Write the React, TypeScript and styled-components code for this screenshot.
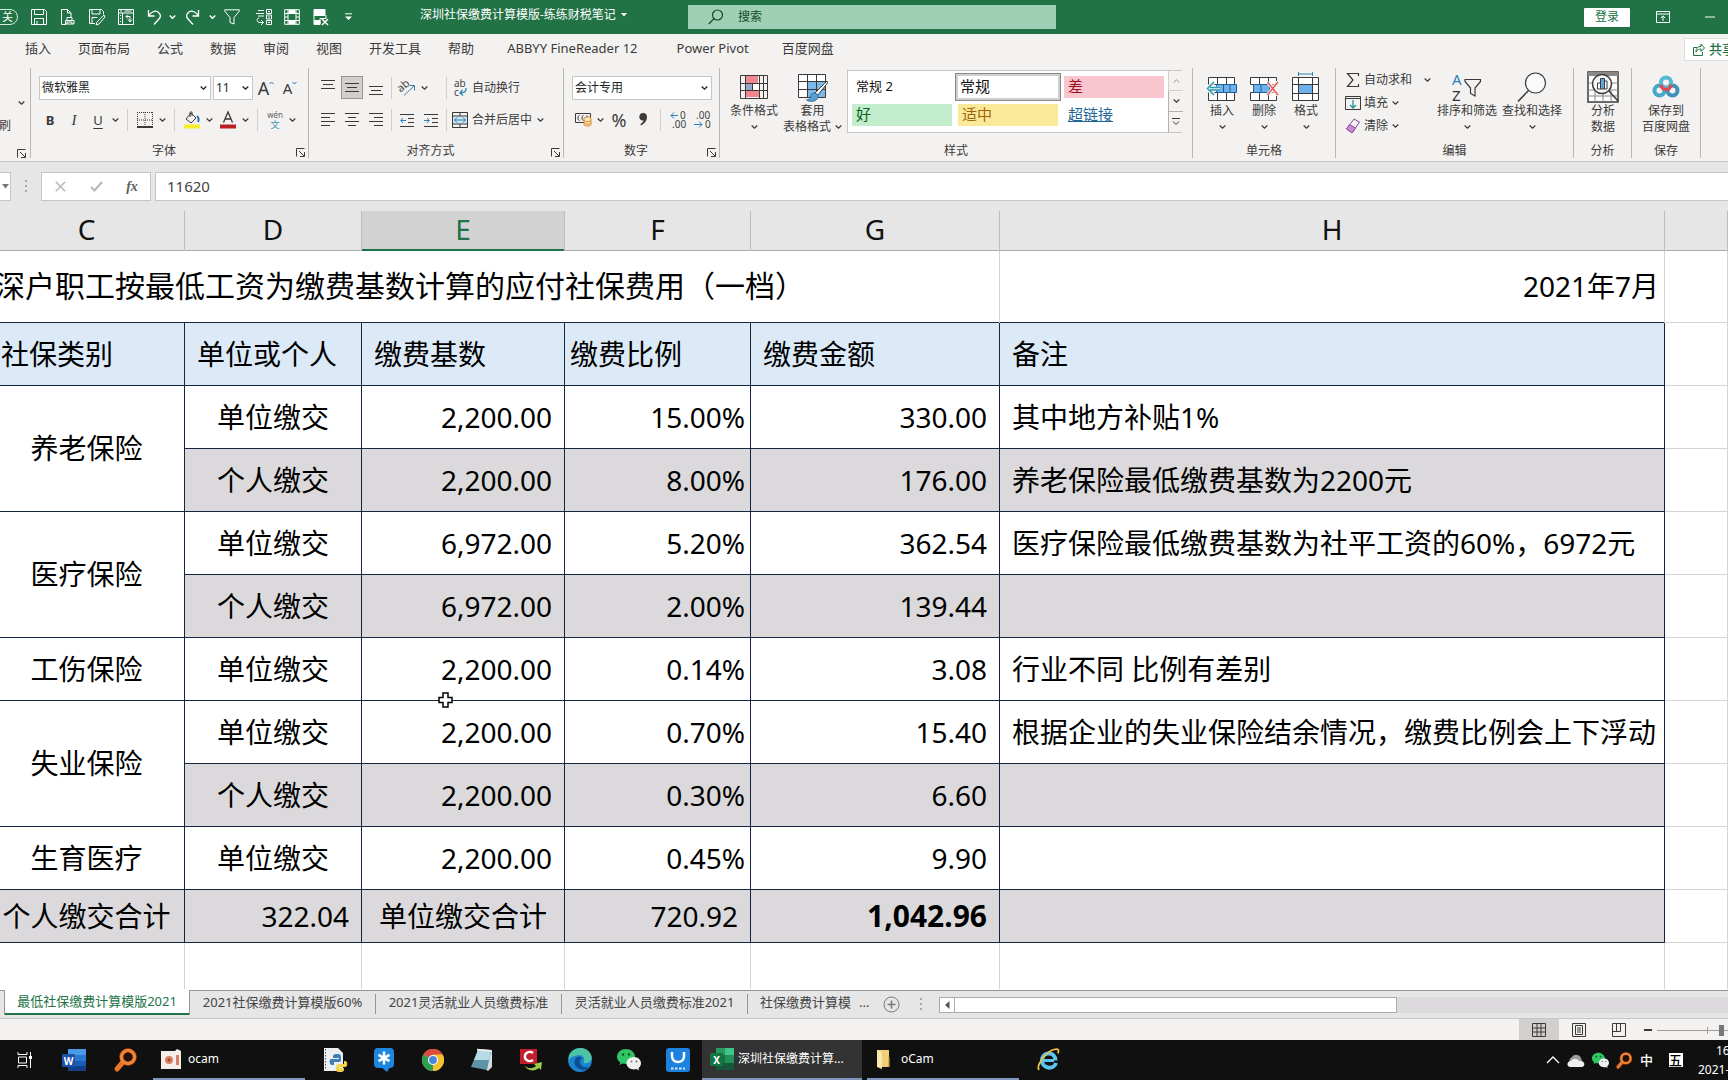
import React from "react";
import styled, { createGlobalStyle } from "styled-components";

const sans = '"Noto Sans", "Noto Sans CJK SC", sans-serif';

const GlobalStyle = createGlobalStyle`
  *, *::before, *::after { box-sizing: border-box; }
  body { margin: 0; overflow: hidden; background: #fff; font-family: ${sans}; }
  button, input, select { font: inherit; color: inherit; }
  button { border: 0; padding: 0; background: none; cursor: default; }
  svg { display: block; flex: none; overflow: visible; }
`;

/* ---------- window ---------- */

const Shell = styled.div`
  display: flex;
  flex-direction: column;
  min-height: 100vh;
  overflow: hidden;
  font-size: 12px;
  line-height: 16px;
  color: #3b3a39;
`;

/* ---------- title bar ---------- */

const TitleBar = styled.header`
  display: grid;
  grid-template-columns: 420px 268px minmax(120px, 368px) 1fr;
  align-items: center;
  height: 34px;
  background: #217346;
  color: #fff;
  white-space: nowrap;
`;

const QuickAccess = styled.div`
  display: flex;
  align-items: center;
  padding-left: 24px;
  position: relative;
`;

const QuickButton = styled.button<{ $w: number }>`
  display: flex;
  align-items: center;
  justify-content: center;
  width: ${(p) => p.$w}px;
  height: 24px;
`;

const AutoSave = styled.button`
  position: absolute;
  left: -14px;
  width: 32px;
  height: 16px;
  border: 1px solid #d7eadf;
  border-radius: 8px;
  padding-right: 4px;
  font-size: 11px;
  line-height: 12px;
  text-align: right;
`;

const DocTitle = styled.button`
  display: flex;
  align-items: center;
  gap: 5px;
  height: 30px;
  align-self: start;
  line-height: 16px;
`;

const SearchBox = styled.label`
  display: flex;
  align-items: center;
  gap: 14px;
  height: 24px;
  align-self: start;
  margin-top: 5px;
  padding-left: 20px;
  background: #9fcfb4;
  color: #134b2b;
`;

const SearchInput = styled.input`
  flex: 1;
  min-width: 0;
  border: 0;
  padding: 0;
  background: none;
  outline: none;
  &::placeholder { color: #134b2b; opacity: 1; }
`;

const WindowTools = styled.div`
  display: flex;
  align-items: center;
  justify-content: flex-end;
  gap: 26px;
  padding-right: 4px;
`;

const SignIn = styled.button`
  width: 46px;
  height: 19px;
  background: #fff;
  color: #217346;
  border-radius: 1px;
`;

/* ---------- ribbon ---------- */

const TabStrip = styled.nav`
  display: flex;
  align-items: center;
  gap: 1px;
  height: 28px;
  padding-left: 12px;
  background: #f3f2f1;
  font-size: 13px;
  white-space: nowrap;
`;

const RibbonTab = styled.button<{ $wide?: boolean }>`
  flex: none;
  padding: 0 ${(p) => (p.$wide ? 19 : 13)}px;
  height: 28px;
`;

const Share = styled.button`
  display: flex;
  align-items: center;
  gap: 4px;
  width: 60px;
  height: 23px;
  margin: 2px -16px 0 auto;
  padding-left: 8px;
  flex: none;
  border: 1px solid #e1dfdd;
  background: #fff;
  color: #217346;
  font-weight: 500;
`;

const Ribbon = styled.section`
  display: flex;
  height: 100px;
  padding: 6px 0 3px;
  background: #f3f2f1;
  border-bottom: 1px solid #c8c6c4;
  overflow: hidden;
  white-space: nowrap;
`;

const Group = styled.section<{ $w: number }>`
  display: flex;
  flex-direction: column;
  flex: none;
  width: ${(p) => p.$w}px;
  height: 90px;
  border-right: 1px solid #b9b7b5;
`;

const GroupBody = styled.div`
  display: flex;
  flex: 1;
  padding: 0 8px;
`;

const GroupFoot = styled.div`
  display: flex;
  align-items: center;
  height: 14px;
  padding: 0 2px;
`;

const Launcher = styled.button`
  padding: 3px 1px 0;
`;

const GroupName = styled.span`
  flex: 1;
  text-align: center;
`;

const ToolRows = styled.div`
  display: flex;
  flex-direction: column;
  gap: 9px;
  padding-top: 8px;
`;

const ToolRow = styled.div`
  display: flex;
  align-items: center;
  gap: 2px;
  height: 23px;
`;

const Tool = styled.button<{ $on?: boolean }>`
  display: flex;
  align-items: center;
  justify-content: center;
  width: 22px;
  height: 23px;
  background: ${(p) => (p.$on ? "#d2d0ce" : "none")};
  border: 1px solid ${(p) => (p.$on ? "#979593" : "transparent")};
`;

const Split = styled.div<{ $w?: number }>`
  display: flex;
  align-items: center;
  width: ${(p) => p.$w ?? 34}px;
`;

const CaretButton = styled.button`
  display: flex;
  justify-content: center;
  width: 12px;
`;

const Sep = styled.i<{ $m: number }>`
  width: 1px;
  height: 22px;
  margin: 0 ${(p) => p.$m}px;
  background: #d2d0ce;
`;

const Glyph = styled.span<{ $size?: number; $bold?: boolean; $italic?: boolean; $underline?: boolean; $serif?: boolean }>`
  font-family: ${(p) => (p.$serif ? '"Liberation Serif", serif' : sans)};
  font-size: ${(p) => p.$size ?? 14}px;
  font-weight: ${(p) => (p.$bold ? 700 : 400)};
  font-style: ${(p) => (p.$italic ? "italic" : "normal")};
  text-decoration: ${(p) => (p.$underline ? "underline" : "none")};
  text-underline-offset: 3px;
  line-height: 20px;
`;

const LabelledTool = styled.button`
  display: flex;
  align-items: center;
  gap: 4px;
  height: 23px;
  padding-left: 1px;
`;

const SelectFrame = styled.label<{ $w: number }>`
  display: grid;
  align-items: center;
  width: ${(p) => p.$w}px;
  height: 24px;
  border: 1px solid #c8c6c4;
  background: #fff;
  color: #201f1e;
  & > * { grid-area: 1 / 1; }
  & > svg { justify-self: end; margin-right: 3px; pointer-events: none; }
`;

const Select = styled.select`
  appearance: none;
  width: 100%;
  height: 22px;
  border: 0;
  padding: 0 0 0 2px;
  background: none;
  outline: none;
`;

const Big = styled.button<{ $w: number }>`
  display: flex;
  flex-direction: column;
  align-items: center;
  flex: none;
  width: ${(p) => p.$w}px;
  height: 67px;
  padding-top: 2px;
`;

const BigIcon = styled.span`
  display: flex;
  align-items: center;
  height: 33px;
`;

const BigLine = styled.span`
  display: flex;
  align-items: center;
  justify-content: center;
  gap: 4px;
  height: 16px;
`;

const EditColumn = styled.div`
  display: flex;
  flex-direction: column;
  width: 92px;
  padding-left: 1px;
`;

const EditItem = styled.button<{ $gap?: number }>`
  display: flex;
  align-items: center;
  height: 23px;
  gap: 3px;
  & > svg:last-child { margin-left: ${(p) => p.$gap ?? 1}px; }
`;

const Gallery = styled.div`
  display: grid;
  grid-template-columns: 1fr 15px;
  flex: none;
  width: 335px;
  height: 63px;
  margin: 2px 0 0 2px;
  border: 1px solid #c8c6c4;
  background: #fff;
`;

const Swatches = styled.div`
  display: grid;
  grid-template-columns: repeat(3, 100px);
  grid-template-rows: 28px 28px;
  gap: 0 6px;
  padding: 2px 4px;
`;

const Swatch = styled.button<{ $bg?: string; $fg: string; $picked?: boolean; $small?: boolean; $link?: boolean }>`
  height: ${(p) => (p.$picked ? 28 : 22)}px;
  align-self: center;
  padding: 0 0 2px 4px;
  margin: 0 ${(p) => (p.$picked ? -3 : 0)}px;
  text-align: left;
  font-size: ${(p) => (p.$small ? 13 : 15)}px;
  line-height: 18px;
  background: ${(p) => p.$bg ?? "none"};
  color: ${(p) => p.$fg};
  border: ${(p) => (p.$picked ? "1px solid #8a8886" : "0")};
  box-shadow: ${(p) => (p.$picked ? "inset 0 0 0 2px #d2d0ce" : "none")};
  text-decoration: ${(p) => (p.$link ? "underline" : "none")};
`;

const GalleryNav = styled.div`
  display: grid;
  grid-template-rows: repeat(3, 1fr);
  background: #f3f2f1;
`;

const GalleryStep = styled.button<{ $off?: boolean }>`
  display: flex;
  align-items: center;
  justify-content: center;
  border: solid #b3b0ad;
  border-width: 0 0 1px 1px;
  opacity: ${(p) => (p.$off ? 0.5 : 1)};
  &:last-child { border-bottom: 0; }
`;

const ClipRest = styled.div`
  display: flex;
  flex: 1;
  flex-direction: column;
  align-items: flex-end;
  justify-content: space-between;
  width: 100%;
  padding: 33px 3px 0 0;
`;

const Clipped = styled.span`
  width: 28px;
`;

/* ---------- formula bar ---------- */

const FormulaBar = styled.div`
  display: flex;
  height: 49px;
  padding: 10px 0;
  background: #e6e6e6;
`;

const FormulaBox = styled.div<{ $w: number }>`
  display: flex;
  align-items: center;
  justify-content: space-around;
  flex: none;
  width: ${(p) => p.$w}px;
  border: 1px solid #c8c6c4;
  border-left-width: ${(p) => (p.$w < 20 ? 0 : 1)}px;
  background: #fff;
  color: #605e5c;
`;

const FormulaDots = styled.div`
  display: flex;
  align-items: center;
  justify-content: center;
  width: 30px;
`;

const FormulaInput = styled.input`
  flex: 1;
  min-width: 0;
  margin-left: 4px;
  padding: 0 11px 2px;
  border: 1px solid #c8c6c4;
  border-right: 0;
  background: #fff;
  outline: none;
  font-size: 15px;
  color: #444;
`;

/* ---------- sheet ---------- */

const Sheet = styled.main`
  position: relative;
  flex: 1;
  overflow: hidden;
  background: #fff;
`;

const Grid = styled.table`
  width: calc(100% + 12px);
  margin-left: -12px;
  table-layout: fixed;
  border-collapse: collapse;
  color: #000;
  font-size: 28px;
  line-height: 36px;
  white-space: nowrap;
`;

const Col = styled.col<{ $w?: number }>`
  width: ${(p) => (p.$w ? p.$w + "px" : "auto")};
`;

const Row = styled.tr<{ $h: number }>`
  height: ${(p) => p.$h}px;
`;

const Letter = styled.th<{ $on?: boolean }>`
  padding: 0 0 4px;
  font-weight: 400;
  color: ${(p) => (p.$on ? "#217346" : "#111")};
  background: ${(p) => (p.$on ? "#d2d2d2" : "#e6e6e6")};
  border: solid #bdbdbd;
  border-width: 0 1px;
  box-shadow: inset 0 ${(p) => (p.$on ? "-2px #217346" : "-1px #ababab")};
`;

type Align = "left" | "center" | "right";
const Cell = styled.td<{ $a?: Align; $bg?: string; $pad?: number; $bold?: boolean }>`
  padding: 0 ${(p) => p.$pad ?? 12}px;
  text-align: ${(p) => p.$a ?? "left"};
  background: ${(p) => p.$bg ?? "#fff"};
  font-weight: ${(p) => (p.$bold ? 700 : 400)};
  font-size: ${(p) => (p.$bold ? 30 : 28)}px;
  border: 1px solid #14263f;
  overflow: hidden;
`;

const Blank = styled.td<{ $a?: Align; $pad?: number; $size?: number; $open?: boolean }>`
  padding: 0 ${(p) => p.$pad ?? 5}px;
  text-align: ${(p) => p.$a ?? "left"};
  font-size: ${(p) => p.$size ?? 28}px;
  border: solid #d4d4d4;
  border-width: 0 1px ${(p) => (p.$open ? 0 : 1)}px;
`;

const CrossCursor = styled.svg`
  position: absolute;
  left: 438px;
  top: 481px;
`;

/* ---------- sheet tabs + status ---------- */

const SheetTabs = styled.nav`
  display: flex;
  height: 29px;
  padding-left: 4px;
  background: #e6e6e6;
  border-top: 1px solid #969696;
  border-bottom: 1px solid #c6c6c6;
  font-size: 13px;
  white-space: nowrap;
  color: #444;
`;

const SheetTab = styled.button<{ $on?: boolean; $last?: boolean }>`
  flex: none;
  display: flex;
  justify-content: ${(p) => (p.$last ? "flex-start" : "center")};
  gap: 8px;
  min-width: ${(p) => (p.$last ? 0 : 186)}px;
  height: ${(p) => (p.$on ? 25 : 20)}px;
  margin-top: ${(p) => (p.$on ? -1 : 3)}px;
  padding: 0 12px;
  line-height: ${(p) => (p.$on ? 23 : 16)}px;
  color: ${(p) => (p.$on ? "#217346" : "#444")};
  background: ${(p) => (p.$on ? "#fff" : "none")};
  border: solid #969696;
  border-width: 0 ${(p) => (p.$last ? 0 : 1)}px 0 ${(p) => (p.$on ? 1 : 0)}px;
  box-shadow: ${(p) => (p.$on ? "inset 0 -2px #217346" : "none")};
`;

const TabTools = styled.div`
  display: flex;
  align-items: center;
  gap: 20px;
  margin: 0 16px 0 2px;
`;

const Scroller = styled.div`
  display: flex;
  flex: 1;
  height: 16px;
  margin-top: 6px;
  background: #dcdadc;
`;

const ScrollArrow = styled.button`
  display: flex;
  align-items: center;
  justify-content: center;
  width: 16px;
  border: 1px solid #ababab;
  background: #fff;
`;

const ScrollThumb = styled.div`
  width: 56%;
  border: 1px solid #ababab;
  border-left: 0;
  background: #fff;
`;

const StatusBar = styled.div`
  display: flex;
  align-items: center;
  justify-content: flex-end;
  height: 21px;
  background: #f3f2f1;
`;

const ViewButton = styled.button<{ $on?: boolean }>`
  display: flex;
  align-items: center;
  justify-content: center;
  width: 40px;
  height: 21px;
  background: ${(p) => (p.$on ? "#d2d0ce" : "none")};
`;

const Zoom = styled.div`
  display: flex;
  align-items: center;
  gap: 5px;
  width: 89px;
  padding-left: 5px;
`;

/* ---------- taskbar ---------- */

const Taskbar = styled.footer`
  display: flex;
  align-items: center;
  height: 40px;
  background: #101010;
  color: #fff;
  white-space: nowrap;
  overflow: hidden;
`;

const Pin = styled.button<{ $w?: number }>`
  display: flex;
  align-items: center;
  justify-content: center;
  flex: none;
  width: ${(p) => p.$w ?? 49}px;
  height: 40px;
`;

const Running = styled.button<{ $w: number; $on?: boolean; $gap?: number }>`
  display: flex;
  align-items: center;
  gap: ${(p) => p.$gap ?? 6}px;
  flex: none;
  width: ${(p) => p.$w}px;
  height: 40px;
  margin-right: 5px;
  padding-left: 8px;
  background: ${(p) => (p.$on ? "#333" : "none")};
  border-bottom: 2px solid #8095bb;
`;

const Tray = styled.div`
  display: flex;
  align-items: center;
  gap: 7px;
  margin-left: auto;
  margin-right: -16px;
`;

const ImeMode = styled.span<{ $boxed?: boolean }>`
  width: 14px;
  margin-right: 8px;
  font-size: 13px;
  line-height: 14px;
  font-weight: 500;
  background: ${(p) => (p.$boxed ? "#fff" : "none")};
  color: ${(p) => (p.$boxed ? "#000" : "#fff")};
`;

const Clock = styled.time`
  display: flex;
  flex-direction: column;
  align-items: flex-start;
  width: 46px;
  line-height: 19px;
  & > :first-child { padding-left: 18px; }
`;

/* ---------- drawings ---------- */

type DrawProps = { w: number; h?: number; vb?: string; children: React.ReactNode; c?: string; s?: number };
const Draw = ({ w, h = w, vb, children, c = "currentColor", s = 1 }: DrawProps) => (
  <svg width={w} height={h} viewBox={vb ?? `0 0 ${w} ${h}`} fill="none" stroke={c} strokeWidth={s} aria-hidden="true">
    {children}
  </svg>
);

const Caret = () => (
  <Draw w={7} h={4} s={1.3}><path d="M.7.5l2.8 2.7L6.3.5" /></Draw>
);
const SolidCaret = () => (
  <Draw w={6} h={4} c="none"><path d="M0 0h6L3 3.5z" fill="#fff" /></Draw>
);

const LaunchIcon = () => (
  <Draw w={9}><path d="M.5 8.5v-8h8M3 3l5 5M8.500 4v4.500H4" /></Draw>
);

const Lines = ({ rows, y = 1.5 }: { rows: [number, number][]; y?: number }) => (
  <Draw w={14} h={16}><path d={rows.map(([a, b], i) => `M${a} ${y + i * 4}H${b}`).join("")} /></Draw>
);

const quick: { name: string; art: React.ReactNode }[] = [
  { name: "保存", art: <path d="M.5.5h13l2 2v13H.5zM3.500.5v5h9v-5M3.500 15.500v-6h9v6M6 15v-3" /> },
  { name: "打印预览", art: <path d="M6 15.500H1.500V.5h6l3.500 3.500v4M7.500.5V4H11M7 11.500V8.500h5v3M5.500 11.500h8.500v3.500H5.500zM7 15v-2h5v2" /> },
  { name: "另存为", art: <path d="M6 14.500H.5V.5h12l2 2v3M3 .5v4.500h8V.5M3 14V8.500h5.500M15 6l-7 7-1 3 3-1 6-7z" /> },
  { name: "数据透视表", art: <path d="M.5.5h15v15H.5zM.5 4h15M4.500 4v11.500M2 2h2M6.500 2h7M2.500 6v1M2.500 9v1M2.500 12v1M12 12V7.500H8M10 5.500l-2 2 2 2M10 10.500l2 2.500 2-2.500" /> },
  { name: "撤消", art: <path d="M1.500 1v6h6M1.500 7C4 3 8 1 11 3s3 5 1 7l-5 5.500" strokeWidth="1.3" /> },
];

const Quick = () => (
  <>
    {quick.map((q) => (
      <QuickButton key={q.name} $w={29} aria-label={q.name}>
        <Draw w={16}>{q.art}</Draw>
      </QuickButton>
    ))}
    <QuickButton $w={6} aria-label="撤消选项"><Draw w={7} h={4} s={1.5}><path d="M.7.5l2.800 2.700L6.300.5" /></Draw></QuickButton>
    <QuickButton $w={34} aria-label="恢复"><Draw w={16} s={1.3}><path d="M14.500 1v6h-6M14.500 7C12 3 8 1 5 3s-3 5-1 7l5 5.500" /></Draw></QuickButton>
    <QuickButton $w={6} aria-label="恢复选项"><Draw w={7} h={4} s={1.5}><path d="M.7.5l2.800 2.700L6.300.5" /></Draw></QuickButton>
    <QuickButton $w={34} aria-label="筛选"><Draw w={16}><path d="M.8.8h14.400v1.500L10 8.500v6.500l-4-1.500v-5L.8 2.300z" /></Draw></QuickButton>
    <QuickButton $w={29} aria-label="分列"><Draw w={16}><path d="M2 1.500h6M0 4.500h8M2 7h6M3 9c-2 0-3 3 0 4.500h4M5 11l2.500 2.500L5 16M10.500.5h5v4h-5zM10.500 6h5v4h-5zM10.500 11.500h5v4h-5zM12 2.500h2M12 8h2M12 13.500h2" /></Draw></QuickButton>
    <QuickButton $w={27} aria-label="表格"><Draw w={16}><path d="M.7.7h14.600v14.600H.7z" /><path d="M4 1v14M12 1v14M1 4.500h14M1 8h3M12 8h3M1 11.500h14" /><path d="M5 1.500h6v3H5zM5 11.500h6v3H5z" fill="#fff" /></Draw></QuickButton>
    <QuickButton $w={31} aria-label="删除工作表"><Draw w={16}><path d="M1 .5h11v6H1z" fill="#fff" /><path d="M1 6v9.500h6V9.500h6V6" /><path d="M1.500 11.500H7v4H1.500z" fill="#fff" /><path d="M9 10l6 6M15 10l-6 6" strokeWidth="1.500" /></Draw></QuickButton>
    <QuickButton $w={25} aria-label="自定义快速访问工具栏"><Draw w={9} h={8}><path d="M1 .8h7" /><path d="M1 3.500h7L4.500 7z" fill="#fff" stroke="none" /></Draw></QuickButton>
  </>
);

const CondIcon = () => (
  <Draw w={28} h={24}>
    <path d="M5 1h13v7H5zM14 15h6v7H5v-7z" fill="#f1868c" stroke="none" />
    <path d="M5 8h8v7H5z" fill="#9aa5cc" stroke="none" />
    <path d="M13 8h6v7h-6z" fill="#fff" stroke="none" />
    <path d="M.5.5h27v23H.5zM.5 8.500h27M.5 15.500h27M5.500.5v23M19.500.5v23M23.500.5v23M12.500 8v7" />
  </Draw>
);

const TableFormatIcon = () => (
  <Draw w={30} h={30}>
    <path d="M1 3h26v22H1z" fill="#fff" stroke="none" />
    <path d="M10 10h17v15H10z" fill="#7cb9e8" stroke="none" />
    <path d="M.5 25.500v-23h27v23zM.5 9.500h27M.5 17.500h27M9.500 2.500v23M18.500 2.500v23" />
    <path d="M29 9L17 21l2.500 2.500L29.500 11z" fill="#fff" />
    <path d="M16.500 21c-3 0-4 2-4 4s-2 3-4 3c3 2 9 2 11-1.500 1-1.500.5-3.500-.5-4.500z" fill="#5b9fd0" stroke="#2a6f9e" />
  </Draw>
);

const CellsIcon = ({ kind }: { kind: "in" | "out" | "fmt" }) => (
  <Draw w={30} h={30}>
    <path d="M2 6h25v22H2z" fill="#fff" stroke="none" />
    {kind === "fmt" ? (
      <>
        <path d="M8 13h14v8H8z" fill="#6fb1ea" stroke="none" />
        <path d="M1.500 5.500h26v23h-26zM1.500 12.500h26M1.500 21.500h26M7.500 5.500v23M21.500 5.500v23" />
        <path d="M7.500 0v4M21.500 0v4M7.500 2h14" stroke="#2b88a8" />
      </>
    ) : (
      <>
        <path d="M1.500 5.500h26v7h-26zM1.500 20.500h26v8h-26zM10.500 5.500v7M19.500 5.500v7M10.500 20.500v8M19.500 20.500v8" />
        <path d={kind === "in" ? "M9.500 12.500h20v8h-20zM16.500 12.500v8M23 12.500v8" : "M4.500 12.500h16v8h-16zM12 12.500v8"} fill="#6fb1ea" stroke="#1f5f99" />
        {kind === "in" ? (
          <>
            <path d="M13 16.500H1M7 10l-6.500 6.500L7 23" stroke="#f3f2f1" strokeWidth="4" />
            <path d="M13 15.500H3M13 18H3M7 10l-6.500 6.500L7 23" stroke="#2b9ab3" strokeWidth="1.500" />
          </>
        ) : (
          <>
            <path d="M19 10l10 13M29 10L19 23" stroke="#f3f2f1" strokeWidth="4" />
            <path d="M18.500 10l10.500 13M29 10L18.500 23" stroke="#e5574f" strokeWidth="1.500" />
          </>
        )}
      </>
    )}
  </Draw>
);

const WeChat = ({ size }: { size: number }) => (
  <Draw w={size} vb="0 0 24 24" c="none">
    <path d="M9 1C4 1 0 4.500 0 8.700c0 2.300 1.200 4.300 3.200 5.700L2.500 17l3-1.600c1 .3 2.300.5 3.500.5 5 0 9-3.300 9-7.300S14 1 9 1z" fill="#2fc464" />
    <circle cx="6" cy="6.500" r="1.200" fill="#0b5426" /><circle cx="12" cy="6.500" r="1.200" fill="#0b5426" />
    <path d="M17 9c-4 0-7.500 2.800-7.500 6.300S13 21.500 17 21.500c.9 0 1.800-.1 2.600-.4L22 22.500l-.5-2.300c1.500-1.200 2.500-2.900 2.500-4.900C24 11.800 21 9 17 9z" fill="#eef2ef" />
    <circle cx="14.500" cy="13.500" r="1" fill="#777" /><circle cx="19.500" cy="13.500" r="1" fill="#777" />
  </Draw>
);

const Finder = ({ size }: { size: number }) => (
  <Draw w={size} vb="0 0 24 24" c="none">
    <circle cx="14" cy="9" r="6.500" fill="none" stroke="#7a2c08" strokeWidth="5" />
    <path d="M9 14l-6 7" stroke="#e8742a" strokeWidth="5" strokeLinecap="round" />
    <circle cx="14" cy="9" r="6.500" fill="#241008" stroke="#f08236" strokeWidth="3.500" />
  </Draw>
);

/* ---------- data ---------- */

const SHADE = "#dbd9db";
const HEAD = "#dce9f7";

type Item = { kind?: string; span?: number; who: string; base: string; rate: string; sum: string; note: string };
const items: Item[] = [
  { kind: "养老保险", span: 2, who: "单位缴交", base: "2,200.00", rate: "15.00%", sum: "330.00", note: "其中地方补贴1%" },
  { who: "个人缴交", base: "2,200.00", rate: "8.00%", sum: "176.00", note: "养老保险最低缴费基数为2200元" },
  { kind: "医疗保险", span: 2, who: "单位缴交", base: "6,972.00", rate: "5.20%", sum: "362.54", note: "医疗保险最低缴费基数为社平工资的60%，6972元" },
  { who: "个人缴交", base: "6,972.00", rate: "2.00%", sum: "139.44", note: "" },
  { kind: "工伤保险", span: 1, who: "单位缴交", base: "2,200.00", rate: "0.14%", sum: "3.08", note: "行业不同 比例有差别" },
  { kind: "失业保险", span: 2, who: "单位缴交", base: "2,200.00", rate: "0.70%", sum: "15.40", note: "根据企业的失业保险结余情况，缴费比例会上下浮动" },
  { who: "个人缴交", base: "2,200.00", rate: "0.30%", sum: "6.60", note: "" },
  { kind: "生育医疗", span: 1, who: "单位缴交", base: "2,200.00", rate: "0.45%", sum: "9.90", note: "" },
];

const menus = ["插入", "页面布局", "公式", "数据", "审阅", "视图", "开发工具", "帮助", "ABBYY FineReader 12", "Power Pivot", "百度网盘"];

/* ---------- parts ---------- */

const RibbonGroup = ({ w, name, launch, children }: { w: number; name: string; launch?: boolean; children: React.ReactNode }) => (
  <Group $w={w} aria-label={name}>
    <GroupBody>{children}</GroupBody>
    <GroupFoot>
      <GroupName>{name}</GroupName>
      {launch && <Launcher aria-label={name + "设置"}><LaunchIcon /></Launcher>}
    </GroupFoot>
  </Group>
);

const SplitTool = ({ name, w, children }: { name: string; w?: number; children: React.ReactNode }) => (
  <Split $w={w}>
    <Tool aria-label={name}>{children}</Tool>
    <CaretButton aria-label={name + "选项"}><Caret /></CaretButton>
  </Split>
);

const Combo = ({ w, value, label }: { w: number; value: string; label: string }) => (
  <SelectFrame $w={w}>
    <Select aria-label={label} defaultValue={value}><option>{value}</option></Select>
    <Caret />
  </SelectFrame>
);

const BigTool = ({ w, icon, lines, end }: { w: number; icon: React.ReactNode; lines: string[]; end?: boolean }) => (
  <Big $w={w}>
    <BigIcon>{icon}</BigIcon>
    <BigLine>{lines[0]}</BigLine>
    {lines[1] ? <BigLine>{lines[1]}{end && <Caret />}</BigLine> : <BigLine><Caret /></BigLine>}
  </Big>
);

const RibbonBar = () => (
  <Ribbon>
    <Group $w={31} aria-label="剪贴板">
      <ClipRest>
        <CaretButton aria-label="粘贴选项"><Caret /></CaretButton>
        <Clipped>刷</Clipped>
        <Launcher aria-label="剪贴板设置"><LaunchIcon /></Launcher>
      </ClipRest>
    </Group>

    <RibbonGroup w={278} name="字体" launch>
      <ToolRows>
        <ToolRow>
          <Combo w={172} value="微软雅黑" label="字体" />
          <Combo w={40} value="11" label="字号" />
          <Tool aria-label="增大字号"><Glyph $size={18}>A</Glyph><Draw w={5} h={14} c="#2b6fb5"><path d="M.5 3l2-2 2 2" /></Draw></Tool>
          <Tool aria-label="减小字号"><Glyph $size={15}>A</Glyph><Draw w={5} h={14} c="#2b6fb5"><path d="M.5 1l2 2 2-2" /></Draw></Tool>
        </ToolRow>
        <ToolRow>
          <Tool aria-label="加粗"><Glyph $size={13} $bold>B</Glyph></Tool>
          <Tool aria-label="倾斜"><Glyph $size={15} $italic $serif>I</Glyph></Tool>
          <SplitTool name="下划线"><Glyph $size={13} $underline>U</Glyph></SplitTool>
          <Sep $m={4} />
          <SplitTool name="边框"><Draw w={16}><path d="M.5 0v15M15.500 0v15M0 .5h16M8 0v15M0 8h16" strokeDasharray="1 1" /><path d="M0 15h16" strokeWidth="2" /></Draw></SplitTool>
          <Sep $m={4} />
          <SplitTool name="填充颜色"><Draw w={16} h={18}><path d="M7 2l5 5-5 5-5-4zM6 6V1.500c0-1 2-1 2 0V5" /><path d="M13 5c2 2 2 4 1 6" stroke="#2b6fb5" strokeWidth="2" /><path d="M0 13.500h16v4H0z" fill="#f7ee2b" stroke="none" /></Draw></SplitTool>
          <SplitTool name="字体颜色"><Draw w={16} h={18}><path d="M3.500 11.500L8 1l4.500 10.500M5 8h6" strokeWidth="1.300" /><path d="M0 13.500h16v4H0z" fill="#b81f24" stroke="none" /></Draw></SplitTool>
          <Sep $m={4} />
          <SplitTool name="拼音"><Draw w={16} h={18}><text x="8" y="7" fontSize="8" textAnchor="middle" fill="#605e5c" stroke="none">wén</text><text x="8" y="17" fontSize="9" textAnchor="middle" fill="#3b8fb8" stroke="none">文</text></Draw></SplitTool>
        </ToolRow>
      </ToolRows>
    </RibbonGroup>

    <RibbonGroup w={255} name="对齐方式" launch>
      <ToolRows>
        <ToolRow>
          <Tool aria-label="顶端对齐"><Lines y={0.5} rows={[[0, 14], [2, 12], [0, 14]]} /></Tool>
          <Tool aria-label="垂直居中" $on><Lines y={3.500} rows={[[0, 14], [2, 12], [0, 14]]} /></Tool>
          <Tool aria-label="底端对齐"><Lines y={6.500} rows={[[0, 14], [2, 12], [0, 14]]} /></Tool>
          <Sep $m={2} />
          <SplitTool name="方向" w={46}><Draw w={18} h={16}><text x="0" y="10" fontSize="11" fill="#444" stroke="none" transform="rotate(-40 5 8)">ab</text><path d="M6 15.500L16 6M11.500 5.500H16.500V10.500" stroke="#3b7ea8" /></Draw></SplitTool>
          <Sep $m={2} />
          <LabelledTool><Draw w={16} h={18}><text x="2" y="8" fontSize="10" fill="#444" stroke="none">ab</text><text x="2" y="17" fontSize="10" fill="#444" stroke="none">c</text><path d="M14 9v1c0 3-2 4-6 4M10.500 11L8 14l3 2.500" stroke="#2b7fb8" strokeWidth="1.300" /></Draw>自动换行</LabelledTool>
        </ToolRow>
        <ToolRow>
          <Tool aria-label="左对齐"><Lines rows={[[0, 14], [0, 9], [0, 14], [0, 9]]} /></Tool>
          <Tool aria-label="居中"><Lines rows={[[0, 14], [3, 11], [0, 14], [3, 11]]} /></Tool>
          <Tool aria-label="右对齐"><Lines rows={[[0, 14], [5, 14], [0, 14], [5, 14]]} /></Tool>
          <Sep $m={2} />
          <Tool aria-label="减少缩进量"><Draw w={14} h={14}><path d="M0 1.500h14M8 5.500h6M8 9.500h6M0 13.500h14" /><path d="M6 7.500H1M3 5L.7 7.500 3 10" stroke="#2b7fb8" /></Draw></Tool>
          <Tool aria-label="增加缩进量"><Draw w={14} h={14}><path d="M0 1.500h14M8 5.500h6M8 9.500h6M0 13.500h14" /><path d="M0 7.500h5M3 5l2.300 2.500L3 10" stroke="#2b7fb8" /></Draw></Tool>
          <Sep $m={2} />
          <LabelledTool><Draw w={16}><path d="M1 4h14v8H1z" fill="#cfe6f3" stroke="none" /><path d="M.5.5h15v15H.5zM.5 4h15M.5 12h15M8 .5V4M8 12v3.500" /><path d="M2.500 8h11M5 5.500L2.500 8 5 10.500M11 5.500L13.500 8 11 10.500" stroke="#2b7fb8" /></Draw>合并后居中</LabelledTool>
          <Split $w={24}><CaretButton aria-label="合并选项"><Caret /></CaretButton></Split>
        </ToolRow>
      </ToolRows>
    </RibbonGroup>

    <RibbonGroup w={156} name="数字" launch>
      <ToolRows>
        <ToolRow><Combo w={140} value="会计专用" label="数字格式" /></ToolRow>
        <ToolRow>
          <SplitTool name="会计数字格式"><Draw w={17} h={15}><path d="M.5 1.500h15v9H.5zM4.500 3.500c-2 0-2 5 0 5M8.500 3.500c-2 0-2 5 0 5M12 3.500v2" /><path d="M9 6.500c0-2 7-2 7 0v6c0 2-7 2-7 0z" fill="#fbe6bd" stroke="#d98b2b" /><path d="M9 8.500c1 1.500 6 1.500 7 0M9 11c1 1.500 6 1.500 7 0" stroke="#d98b2b" /></Draw></SplitTool>
          <Tool aria-label="百分比样式"><Glyph $size={18}>%</Glyph></Tool>
          <Tool aria-label="千位分隔样式"><Draw w={8} h={13} c="none"><path d="M4 0c3 0 4 2 4 4 0 4-3 7-6 8.500l-.7-1C3 10 4.500 8.500 4.500 7.300 2 8 .3 6 .3 4S1.500 0 4 0z" fill="#3b3a39" /></Draw></Tool>
          <Sep $m={4} />
          <Tool aria-label="增加小数位数"><Draw w={17} h={18}><path d="M8 4.500H1M4 1.500L1 4.500l3 3" stroke="#2b7fb8" /><text x="10" y="8" fontSize="10" fill="#444" stroke="none">0</text><text x="2" y="17" fontSize="10" fill="#444" stroke="none">.00</text></Draw></Tool>
          <Tool aria-label="减少小数位数"><Draw w={17} h={18}><text x="2" y="8" fontSize="10" fill="#444" stroke="none">.00</text><path d="M0 13.500h8M5 10.500l3 3-3 3" stroke="#2b7fb8" /><text x="11" y="17" fontSize="10" fill="#444" stroke="none">0</text></Draw></Tool>
        </ToolRow>
      </ToolRows>
    </RibbonGroup>

    <RibbonGroup w={473} name="样式">
      <BigTool w={52} icon={<CondIcon />} lines={["条件格式"]} />
      <BigTool w={65} icon={<TableFormatIcon />} lines={["套用", "表格格式"]} end />
      <Gallery>
        <Swatches>
          <Swatch $fg="#111" $small>常规 2</Swatch>
          <Swatch $fg="#111" $picked>常规</Swatch>
          <Swatch $bg="#f9c6d0" $fg="#9c1020">差</Swatch>
          <Swatch $bg="#c3edcd" $fg="#0b6118">好</Swatch>
          <Swatch $bg="#fbe99a" $fg="#9c6408">适中</Swatch>
          <Swatch $fg="#1f6796" $link>超链接</Swatch>
        </Swatches>
        <GalleryNav>
          <GalleryStep $off aria-label="上一行"><Draw w={7} h={4}><path d="M.7 3.500L3.500.8l2.800 2.700" /></Draw></GalleryStep>
          <GalleryStep aria-label="下一行"><Caret /></GalleryStep>
          <GalleryStep aria-label="其他"><Draw w={8} h={8}><path d="M0 .5h8M1 3.500l3 3 3-3" /></Draw></GalleryStep>
        </GalleryNav>
      </Gallery>
    </RibbonGroup>

    <RibbonGroup w={143} name="单元格">
      <BigTool w={42} icon={<CellsIcon kind="in" />} lines={["插入"]} />
      <BigTool w={42} icon={<CellsIcon kind="out" />} lines={["删除"]} />
      <BigTool w={42} icon={<CellsIcon kind="fmt" />} lines={["格式"]} />
    </RibbonGroup>

    <RibbonGroup w={238} name="编辑">
      <EditColumn>
        <EditItem $gap={9}><Draw w={16}><path d="M13.500 4V1.500h-11L8 8l-5.500 6.500h11V12" strokeWidth="1.200" /></Draw>自动求和<Caret /></EditItem>
        <EditItem><Draw w={16}><path d="M.5 1.500h15v13H.5zM.5 3.500h15" /><path d="M8 5v8M5 10l3 3 3-3" stroke="#2b8fa8" strokeWidth="1.300" /></Draw>填充<Caret /></EditItem>
        <EditItem><Draw w={16}><path d="M9 1l5.500 3-7 10.500L1.500 11z" stroke="#8d4b9b" /><path d="M4.500 6.500l6 3.500-3.500 5-5.500-4z" fill="#c98ad6" stroke="#8d4b9b" /></Draw>清除<Caret /></EditItem>
      </EditColumn>
      <BigTool w={64} icon={<Draw w={30} h={30}><text x="0" y="13" fontSize="15" fill="#2b7fb8" stroke="none">A</text><text x="0" y="29" fontSize="15" fill="#333" stroke="none">Z</text><path d="M13 7.500h15.500v2L23 16v8l-4.500-2.500V16L13 9.500z" strokeWidth="1.200" /></Draw>} lines={["排序和筛选"]} />
      <BigTool w={66} icon={<Draw w={30} h={30}><circle cx="18.500" cy="11" r="10" fill="#fafafa" strokeWidth="1.200" /><path d="M11.500 18.500L1 29.500" strokeWidth="1.500" /></Draw>} lines={["查找和选择"]} />
    </RibbonGroup>

    <RibbonGroup w={58} name="分析">
      <BigTool w={42} icon={<Draw w={32} h={32}><path d="M1 1h30v30H1z" fill="#fff" strokeWidth="1.500" /><path d="M1 1h30v4H1z" fill="#8a8886" stroke="none" /><path d="M1 12h30M1 19h30M1 25h30M8 19v12M16 19v12M24 19v12" stroke="#8a8886" /><circle cx="15" cy="13" r="9.500" fill="#f7f7f7" strokeWidth="1.500" /><path d="M22 20l9 10" strokeWidth="1.500" /><path d="M10.500 12h3v6h-3zM17.500 10h2.500v8h-2.500z" fill="#fff" /><path d="M13.500 7.500h4V18h-4z" fill="#5aa7dc" /></Draw>} lines={["分析", "数据"]} />
    </RibbonGroup>

    <RibbonGroup w={69} name="保存">
      <BigTool w={52} icon={<Draw w={28} h={26} c="none"><circle cx="7.500" cy="16.500" r="5" stroke="#45a9c9" strokeWidth="4" /><circle cx="20.500" cy="16.500" r="5" stroke="#3d93b8" strokeWidth="4" /><circle cx="14" cy="8.500" r="5" stroke="#58b9d6" strokeWidth="4" /><path d="M9 10.500a5 5 0 0 0 10 0" stroke="#de4a5a" strokeWidth="3.500" /></Draw>} lines={["保存到", "百度网盘"]} />
    </RibbonGroup>
  </Ribbon>
);

const SheetGrid = () => (
  <Sheet>
    <Grid>
      <colgroup>
        <Col $w={196} /><Col $w={177} /><Col $w={203} /><Col $w={186} /><Col $w={249} /><Col $w={665} /><Col />
      </colgroup>
      <thead>
        <Row $h={40}>
          {["C", "D", "E", "F", "G", "H", ""].map((l) => <Letter key={l} scope="col" $on={l === "E"}>{l}</Letter>)}
        </Row>
      </thead>
      <tbody>
        <Row $h={71}>
          <Blank colSpan={5} $pad={6} $size={30} $open>深户职工按最低工资为缴费基数计算的应付社保费用（一档）</Blank>
          <Blank $a="right" $open>2021年7月</Blank>
          <Blank />
        </Row>
        <Row $h={63}>
          <Cell $bg={HEAD}>社保类别</Cell>
          <Cell $bg={HEAD}>单位或个人</Cell>
          <Cell $bg={HEAD}>缴费基数</Cell>
          <Cell $bg={HEAD} $pad={5}>缴费比例</Cell>
          <Cell $bg={HEAD}>缴费金额</Cell>
          <Cell $bg={HEAD}>备注</Cell>
          <Blank />
        </Row>
        {items.map((r, i) => {
          const bg = r.kind ? undefined : SHADE;
          return (
            <Row $h={63} key={i}>
              {r.kind && <Cell $a="center" rowSpan={r.span}>{r.kind}</Cell>}
              <Cell $a="center" $bg={bg}>{r.who}</Cell>
              <Cell $a="right" $bg={bg}>{r.base}</Cell>
              <Cell $a="right" $bg={bg} $pad={5}>{r.rate}</Cell>
              <Cell $a="right" $bg={bg}>{r.sum}</Cell>
              <Cell $bg={bg}>{r.note}</Cell>
              <Blank />
            </Row>
          );
        })}
        <Row $h={53}>
          <Cell $bg={SHADE} $a="center">个人缴交合计</Cell>
          <Cell $bg={SHADE} $a="right">322.04</Cell>
          <Cell $bg={SHADE} $a="center">单位缴交合计</Cell>
          <Cell $bg={SHADE} $a="right">720.92</Cell>
          <Cell $bg={SHADE} $a="right" $bold>1,042.96</Cell>
          <Cell $bg={SHADE} />
          <Blank />
        </Row>
        <Row $h={47}>
          {[0, 1, 2, 3, 4, 5, 6].map((n) => <Blank key={n} $open />)}
        </Row>
      </tbody>
    </Grid>
    <CrossCursor width="15" height="16" viewBox="0 0 15 16" aria-hidden="true">
      <path d="M5 1h5v4.500h4v5h-4V15H5v-4.500H1v-5h4z" fill="#fff" stroke="#000" strokeWidth="1.500" />
    </CrossCursor>
  </Sheet>
);

const TaskIcons = () => (
  <>
    <Pin aria-label="Python"><Draw w={24} vb="0 0 24 24" c="none"><path d="M1 0h14l5 5v18H1z" fill="#eceff1" /><path d="M2.500 1v21" stroke="#555" strokeDasharray="1.500 1.500" /><path d="M14 6c-4 0-4 1-4 4h6v1H8c-2 0-2 6 1 6h2v-3h5c2 0 2-1 2-4s0-4-4-4z" fill="#3f7fb5" /><path d="M17 24c4 0 4-1 4-4h-5v-1h6c3 0 3-6 0-6h-1v3h-5c-2 0-3 1-3 4s0 4 4 4z" fill="#f6d24a" /></Draw></Pin>
    <Pin aria-label="星标"><Draw w={22} h={24} c="none"><rect x="1" y="0" width="20" height="20" rx="4" fill="#1d86dd" /><path d="M8 19h9l-3 5z" fill="#1d86dd" /><path d="M11 3.500v13M5.500 6.800l11 6.400M16.500 6.800l-11 6.400" stroke="#fff" strokeWidth="2.500" /></Draw></Pin>
    <Pin aria-label="Chrome"><Draw w={22} vb="0 0 24 24" c="none"><circle cx="12" cy="12" r="12" fill="#f2c230" /><path d="M12 12L1.600 6A12 12 0 0 1 22.400 6z" fill="#dd4b3e" /><path d="M12 12L1.600 6A12 12 0 0 0 12 24z" fill="#2f9e4f" /><path d="M12 6h10.400A12 12 0 0 1 12 24l5-9z" fill="#f2c230" /><circle cx="12" cy="12" r="5.500" fill="#fff" /><circle cx="12" cy="12" r="4.300" fill="#4a86e0" /></Draw></Pin>
    <Pin aria-label="记事本"><Draw w={24} c="none"><path d="M8 1l14 1v17l-4 4-3-2L21 4z" fill="#d8dcdc" /><path d="M8 2l13 1-4 19L1 19z" fill="#5d93a6" /><path d="M8 2l13 1-2 9-15 0z" fill="#b4dbe6" /><path d="M7 .8l14 1.200v2L7 2.800z" fill="#e4e9ea" /></Draw></Pin>
    <Pin aria-label="Camtasia"><Draw w={24} c="none"><path d="M1 1h17v15H1z" fill="#c01f2b" /><path d="M14 5a5 4.500 0 1 0 0 7" stroke="#fff" strokeWidth="2.500" /><path d="M5 17c3 4 9 4 12 1l-2-2 8-2-1 8-2-2c-5 4-12 3-15-3z" fill="#9ccb4e" /></Draw></Pin>
    <Pin aria-label="Edge"><Draw w={24} c="none"><circle cx="12" cy="12" r="12" fill="#1b84cf" /><path d="M1 8C4-2 20-3 23.500 8c1 5-3 8-8 7 3-6-3-10-8-7-3 0-5 1-6.500 4z" fill="#4cc3a5" /><path d="M8 10c-4 5 0 12 8 12 2 0 4-1 5-3-5 1-9-1-9-5 0-2 1-3 2-4-2-2-5-1-6 0z" fill="#0e4f94" /></Draw></Pin>
    <Pin aria-label="微信"><WeChat size={24} /></Pin>
    <Pin aria-label="U"><Draw w={24} c="none"><rect width="24" height="24" rx="3" fill="#1c82dd" /><path d="M6 4v4c0 8 12 8 12 0V4" stroke="#fff" strokeWidth="2.500" /><path d="M5 20.500h14" stroke="#cfe6fa" strokeWidth="2" strokeDasharray="2.500 1.500" /></Draw></Pin>
  </>
);

export default function App() {
  return (
    <Shell>
      <GlobalStyle />
      <TitleBar>
        <QuickAccess>
          <AutoSave>关</AutoSave>
          <Quick />
        </QuickAccess>
        <DocTitle>深圳社保缴费计算模版-练练财税笔记<SolidCaret /></DocTitle>
        <SearchBox>
          <Draw w={16}><circle cx="9.500" cy="6" r="5" strokeWidth="1.200" /><path d="M6 9.500L.8 15" strokeWidth="1.200" /></Draw>
          <SearchInput aria-label="搜索" placeholder="搜索" />
        </SearchBox>
        <WindowTools>
          <SignIn>登录</SignIn>
          <QuickButton $w={14} aria-label="功能区显示选项"><Draw w={14} h={12}><path d="M.5.5h13v11H.5zM.5 3h13M7 10V5M5 7l2-2.200L9 7" /></Draw></QuickButton>
          <QuickButton $w={28} aria-label="最小化"><Draw w={10} h={2}><path d="M0 1h10" /></Draw></QuickButton>
        </WindowTools>
      </TitleBar>

      <TabStrip>
        {menus.map((m) => <RibbonTab key={m} $wide={/^[A-Z]/.test(m)}>{m}</RibbonTab>)}
        <Share><Draw w={12} h={13}><path d="M4 4.500H.5v8h9V9" /><path d="M3 9c0-4 2-5.500 5-5.500V1l3.500 4L8 8.500V6C6 6 4 7 3 9z" /></Draw>共享</Share>
      </TabStrip>

      <RibbonBar />

      <FormulaBar>
        <FormulaBox $w={11}><Draw w={7} h={5} c="none"><path d="M0 0h7L3.500 4.500z" fill="#777" /></Draw></FormulaBox>
        <FormulaDots><Draw w={3} h={13} c="none"><path d="M0 0h2v2H0zM0 5h2v2H0zM0 10h2v2H0z" fill="#a8a8a8" /></Draw></FormulaDots>
        <FormulaBox $w={110}>
          <Tool aria-label="取消"><Draw w={11} c="#b8b6b4" s={1.5}><path d="M.8.8l9.400 9.400M10.200.8L.8 10.200" /></Draw></Tool>
          <Tool aria-label="输入"><Draw w={13} h={11} c="#b8b6b4" s={2}><path d="M1 6l3.500 3.500L12 1" /></Draw></Tool>
          <Tool aria-label="插入函数"><Glyph $size={14} $italic $serif $bold>fx</Glyph></Tool>
        </FormulaBox>
        <FormulaInput aria-label="编辑栏" defaultValue="11620" />
      </FormulaBar>

      <SheetGrid />

      <SheetTabs>
        <SheetTab $on>最低社保缴费计算模版2021</SheetTab>
        <SheetTab>2021社保缴费计算模版60%</SheetTab>
        <SheetTab>2021灵活就业人员缴费标准</SheetTab>
        <SheetTab>灵活就业人员缴费标准2021</SheetTab>
        <SheetTab $last><span>社保缴费计算模</span><span>...</span></SheetTab>
        <TabTools>
          <button aria-label="新工作表"><Draw w={17} c="#777"><circle cx="8.500" cy="8.500" r="7.500" /><path d="M8.500 4.500v8M4.500 8.500h8" strokeWidth="1.500" /></Draw></button>
          <Draw w={3} h={13} c="none"><path d="M0 0h2v2H0zM0 5h2v2H0zM0 10h2v2H0z" fill="#a8a8a8" /></Draw>
        </TabTools>
        <Scroller>
          <ScrollArrow aria-label="向左滚动"><Draw w={5} h={8} c="none"><path d="M4.500 0v8L0 4z" fill="#555" /></Draw></ScrollArrow>
          <ScrollThumb />
        </Scroller>
      </SheetTabs>

      <StatusBar>
        <ViewButton $on aria-label="普通"><Draw w={14}><path d="M.5.5h13v13H.5zM5 .5v13M9 .5v13M.5 5h13M.5 9h13" /></Draw></ViewButton>
        <ViewButton aria-label="页面布局视图"><Draw w={14}><path d="M.5.5h13v13H.5zM3.500 2.500h7v9h-7zM5 5h4M5 7h4M5 9h4" /></Draw></ViewButton>
        <ViewButton aria-label="分页预览"><Draw w={14}><path d="M.5.5h13v13H.5zM.5 8.500h8v-8M4.500.5v8" /></Draw></ViewButton>
        <Zoom>
          <button aria-label="缩小"><Draw w={8} h={2} s={2}><path d="M0 1h8" /></Draw></button>
          <Draw w={72} h={14} c="#a19f9d"><path d="M0 7.500h72M50.500 4v7" /><path d="M62 2h5v11h-5z" fill="#777" stroke="none" /></Draw>
        </Zoom>
      </StatusBar>

      <Taskbar>
        <Pin aria-label="任务视图"><Draw w={16} h={16}><path d="M1 0v2.500h9V0M1 16v-2.500h9V16M1.500 5h8v6h-8zM13.500 0v16" /><path d="M12 4h3v3h-3z" fill="#fff" stroke="none" /></Draw></Pin>
        <Pin $w={50} aria-label="Word"><Draw w={24} c="none"><path d="M6 1h18v6H6z" fill="#4a9ae8" /><path d="M6 7h18v6H6z" fill="#2b78d0" /><path d="M6 13h18v5H6z" fill="#1c5cb5" /><path d="M6 18h18v5H6z" fill="#123f88" /><rect y="6" width="13" height="13" rx="1" fill="#1c53a6" /><text x="6.500" y="16.500" fontSize="10" fontWeight="700" textAnchor="middle" fill="#fff">W</text></Draw></Pin>
        <Pin $w={54} aria-label="搜索"><Finder size={24} /></Pin>
        <Running $w={152} $gap={7}><Draw w={20} c="none"><path d="M0 2h14l2-2 4 2v18H0z" fill="#f5efec" /><circle cx="8" cy="11" r="4" fill="#d98064" /><circle cx="8" cy="11" r="1.500" fill="#a8442a" /><path d="M15 6h3v10h-3z" fill="#d98064" /></Draw>ocam</Running>
        <TaskIcons />
        <Running $w={160} $on $gap={4}><Draw w={24} c="none"><path d="M6 1h9v7H6z" fill="#2a9a63" /><path d="M15 1h9v7h-9z" fill="#3fc58a" /><path d="M6 8h9v8H6z" fill="#187044" /><path d="M15 8h9v8h-9z" fill="#219158" /><path d="M6 16h18v7H6z" fill="#15593a" /><rect y="6" width="13" height="13" rx="1" fill="#147544" /><text x="6.500" y="16.500" fontSize="10" fontWeight="700" textAnchor="middle" fill="#fff">X</text></Draw>深圳社保缴费计算...</Running>
        <Running $w={152} $gap={8}><Draw w={18} h={20} c="none"><path d="M2 1h12v17H2z" fill="#f2cf74" /><path d="M2 1l5 2v17l-5-2z" fill="#fbe7ab" /><path d="M13 8h1.500v10H13z" fill="#d9ab45" /></Draw>oCam</Running>
        <Pin aria-label="Internet Explorer"><Draw w={24} c="none"><path d="M5 12.500h12" stroke="#5cc4ee" strokeWidth="3" /><path d="M19 15c-2 7-14 6-14-2.500C5 3 18.500 3 18.500 12.500" stroke="#5cc4ee" strokeWidth="4" /><path d="M2 22C-1 18 8 4 17 1.500c5-1.500 5 1 4 4" stroke="#e9c04a" strokeWidth="1.800" /></Draw></Pin>
        <Tray>
          <button aria-label="显示隐藏的图标"><Draw w={14} h={8} s={1.3}><path d="M1 7l6-6 6 6" /></Draw></button>
          <Draw w={18} h={13} c="none"><path d="M4 10a4 4 0 0 1 1-7c2-3 7-3 9 1l2 6z" fill="#9c9c9c" /><path d="M3 13c-4-1-3-6 1-6 2-3 6-3 8 0 6-1 7 5 3 6z" fill="#efefef" /></Draw>
          <WeChat size={17} />
          <Finder size={17} />
          <ImeMode>中</ImeMode>
          <ImeMode $boxed>五</ImeMode>
          <Clock><span>16</span><span>2021-</span></Clock>
        </Tray>
      </Taskbar>
    </Shell>
  );
}
